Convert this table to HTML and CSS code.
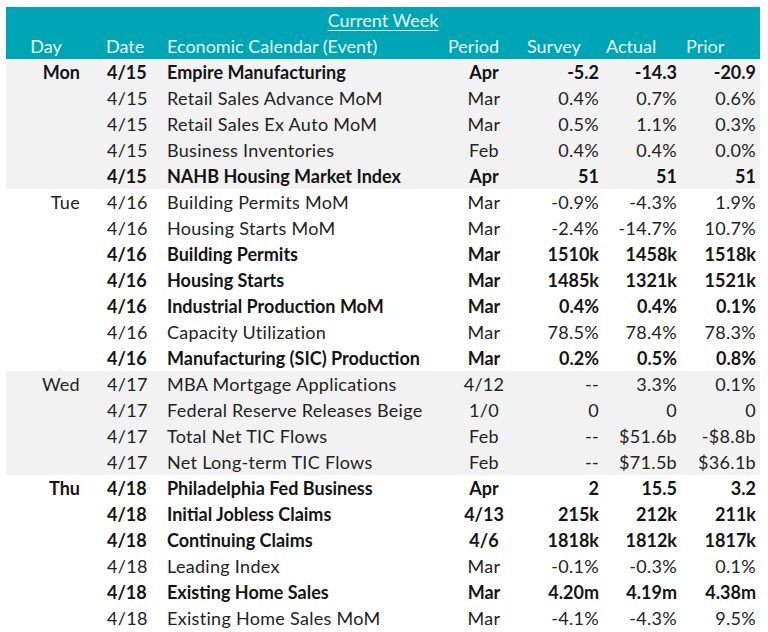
FILE: index.html
```html
<!DOCTYPE html>
<html>
<head>
<meta charset="utf-8">
<link rel="stylesheet" href="styles.css">
</head>
<body>
<div class="sheet">
  <div class="head">
    <div class="title"><span>Current Week</span></div>
    <div class="row cols">
      <div class="c day">Day</div>
      <div class="c date">Date</div>
      <div class="c ev">Economic Calendar (Event)</div>
      <div class="c per">Period</div>
      <div class="c sur">Survey</div>
      <div class="c act">Actual</div>
      <div class="c pri">Prior</div>
    </div>
  </div>

  <div class="group shade">
    <div class="row b"><div class="c day">Mon</div><div class="c date">4/15</div><div class="c ev">Empire Manufacturing</div><div class="c per">Apr</div><div class="c sur">-5.2</div><div class="c act">-14.3</div><div class="c pri">-20.9</div></div>
    <div class="row"><div class="c day"></div><div class="c date">4/15</div><div class="c ev">Retail Sales Advance MoM</div><div class="c per">Mar</div><div class="c sur">0.4%</div><div class="c act">0.7%</div><div class="c pri">0.6%</div></div>
    <div class="row"><div class="c day"></div><div class="c date">4/15</div><div class="c ev">Retail Sales Ex Auto MoM</div><div class="c per">Mar</div><div class="c sur">0.5%</div><div class="c act">1.1%</div><div class="c pri">0.3%</div></div>
    <div class="row"><div class="c day"></div><div class="c date">4/15</div><div class="c ev">Business Inventories</div><div class="c per">Feb</div><div class="c sur">0.4%</div><div class="c act">0.4%</div><div class="c pri">0.0%</div></div>
    <div class="row b"><div class="c day"></div><div class="c date">4/15</div><div class="c ev">NAHB Housing Market Index</div><div class="c per">Apr</div><div class="c sur">51</div><div class="c act">51</div><div class="c pri">51</div></div>
  </div>

  <div class="group">
    <div class="row"><div class="c day">Tue</div><div class="c date">4/16</div><div class="c ev">Building Permits MoM</div><div class="c per">Mar</div><div class="c sur">-0.9%</div><div class="c act">-4.3%</div><div class="c pri">1.9%</div></div>
    <div class="row"><div class="c day"></div><div class="c date">4/16</div><div class="c ev">Housing Starts MoM</div><div class="c per">Mar</div><div class="c sur">-2.4%</div><div class="c act">-14.7%</div><div class="c pri">10.7%</div></div>
    <div class="row b"><div class="c day"></div><div class="c date">4/16</div><div class="c ev">Building Permits</div><div class="c per">Mar</div><div class="c sur">1510k</div><div class="c act">1458k</div><div class="c pri">1518k</div></div>
    <div class="row b"><div class="c day"></div><div class="c date">4/16</div><div class="c ev">Housing Starts</div><div class="c per">Mar</div><div class="c sur">1485k</div><div class="c act">1321k</div><div class="c pri">1521k</div></div>
    <div class="row b"><div class="c day"></div><div class="c date">4/16</div><div class="c ev">Industrial Production MoM</div><div class="c per">Mar</div><div class="c sur">0.4%</div><div class="c act">0.4%</div><div class="c pri">0.1%</div></div>
    <div class="row"><div class="c day"></div><div class="c date">4/16</div><div class="c ev">Capacity Utilization</div><div class="c per">Mar</div><div class="c sur">78.5%</div><div class="c act">78.4%</div><div class="c pri">78.3%</div></div>
    <div class="row b"><div class="c day"></div><div class="c date">4/16</div><div class="c ev">Manufacturing (SIC) Production</div><div class="c per">Mar</div><div class="c sur">0.2%</div><div class="c act">0.5%</div><div class="c pri">0.8%</div></div>
  </div>

  <div class="group shade">
    <div class="row"><div class="c day">Wed</div><div class="c date">4/17</div><div class="c ev">MBA Mortgage Applications</div><div class="c per">4/12</div><div class="c sur">--</div><div class="c act">3.3%</div><div class="c pri">0.1%</div></div>
    <div class="row"><div class="c day"></div><div class="c date">4/17</div><div class="c ev">Federal Reserve Releases Beige</div><div class="c per">1/0</div><div class="c sur">0</div><div class="c act">0</div><div class="c pri">0</div></div>
    <div class="row"><div class="c day"></div><div class="c date">4/17</div><div class="c ev">Total Net TIC Flows</div><div class="c per">Feb</div><div class="c sur">--</div><div class="c act">$51.6b</div><div class="c pri">-$8.8b</div></div>
    <div class="row"><div class="c day"></div><div class="c date">4/17</div><div class="c ev">Net Long-term TIC Flows</div><div class="c per">Feb</div><div class="c sur">--</div><div class="c act">$71.5b</div><div class="c pri">$36.1b</div></div>
  </div>

  <div class="group">
    <div class="row b"><div class="c day">Thu</div><div class="c date">4/18</div><div class="c ev">Philadelphia Fed Business</div><div class="c per">Apr</div><div class="c sur">2</div><div class="c act">15.5</div><div class="c pri">3.2</div></div>
    <div class="row b"><div class="c day"></div><div class="c date">4/18</div><div class="c ev">Initial Jobless Claims</div><div class="c per">4/13</div><div class="c sur">215k</div><div class="c act">212k</div><div class="c pri">211k</div></div>
    <div class="row b"><div class="c day"></div><div class="c date">4/18</div><div class="c ev">Continuing Claims</div><div class="c per">4/6</div><div class="c sur">1818k</div><div class="c act">1812k</div><div class="c pri">1817k</div></div>
    <div class="row"><div class="c day"></div><div class="c date">4/18</div><div class="c ev">Leading Index</div><div class="c per">Mar</div><div class="c sur">-0.1%</div><div class="c act">-0.3%</div><div class="c pri">0.1%</div></div>
    <div class="row b"><div class="c day"></div><div class="c date">4/18</div><div class="c ev">Existing Home Sales</div><div class="c per">Mar</div><div class="c sur">4.20m</div><div class="c act">4.19m</div><div class="c pri">4.38m</div></div>
    <div class="row"><div class="c day"></div><div class="c date">4/18</div><div class="c ev">Existing Home Sales MoM</div><div class="c per">Mar</div><div class="c sur">-4.1%</div><div class="c act">-4.3%</div><div class="c pri">9.5%</div></div>
  </div>
</div>
</body>
</html>
```
FILE: styles.css
```css
html, body {
  margin: 0;
  padding: 0;
  background: #ffffff;
}
body {
  font-family: Lato, "Open Sans", sans-serif;
  font-size: 18px;
  color: #222222;
}
.sheet {
  padding: 7px 0 0 6px;
  width: 754px;
}
.head {
  background: #00a5b5;
  color: #e9f6f8;
}
.title {
  height: 26px;
  line-height: 26px;
  text-align: center;
}
.title span {
  text-decoration: underline;
  text-underline-offset: 3px;
}
.row {
  display: grid;
  grid-template-columns: 80px 75px 279px 80px 80px 78px 82px;
  height: 26px;
  line-height: 26px;
  white-space: nowrap;
  letter-spacing: 0.3px;
}
.row.b {
  font-weight: 700;
  color: #141414;
  letter-spacing: 0;
}
.row.cols {
  letter-spacing: 0;
}
.shade {
  background: #f2f2f2;
}
.day { text-align: right; padding-right: 6px; }
.date { padding-left: 21px; }
.ev { padding-left: 6px; }
.per { text-align: center; padding-left: 8px; }
.sur { text-align: right; padding-right: 1px; }
.act { text-align: right; padding-right: 1px; }
.pri { text-align: right; padding-right: 4px; }

.cols .c { text-align: left; padding-right: 0; }
.cols .day { text-align: center; padding: 0; }
.cols .date { padding-left: 20px; }
.cols .ev { padding-left: 6px; }
.cols .per { padding-left: 8px; }
.cols .sur { padding-left: 7px; }
.cols .act { padding-left: 6px; }
.cols .pri { padding-left: 8px; }
```
